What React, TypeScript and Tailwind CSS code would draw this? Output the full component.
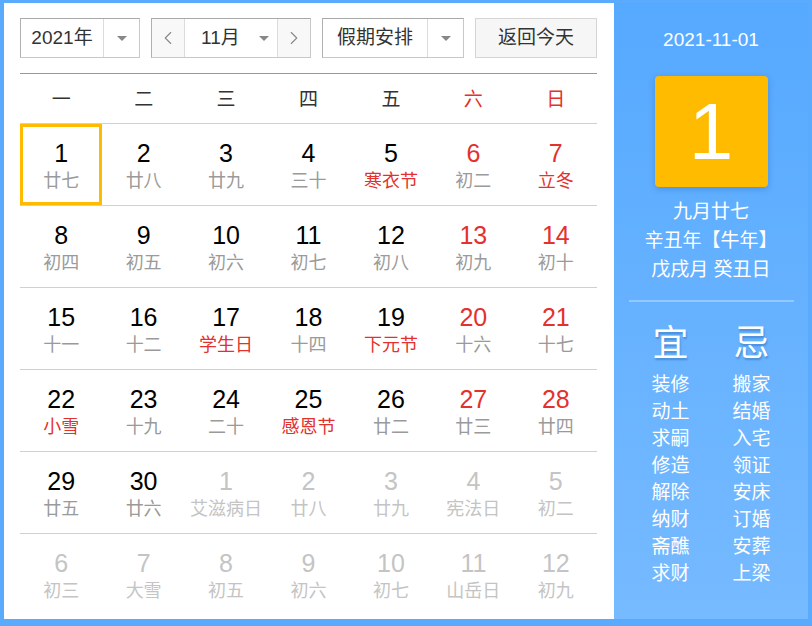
import { ChevronLeft, ChevronRight } from "lucide-react"

type Day = {
  n: number
  lunar: string
  red?: boolean // red day number (weekend)
  fest?: boolean // red lunar text (festival / solar term)
  other?: boolean // day from the next month
}

const weekdays = ["一", "二", "三", "四", "五", "六", "日"]

const rows: Day[][] = [
  [
    { n: 1, lunar: "廿七" },
    { n: 2, lunar: "廿八" },
    { n: 3, lunar: "廿九" },
    { n: 4, lunar: "三十" },
    { n: 5, lunar: "寒衣节", fest: true },
    { n: 6, lunar: "初二", red: true },
    { n: 7, lunar: "立冬", red: true, fest: true },
  ],
  [
    { n: 8, lunar: "初四" },
    { n: 9, lunar: "初五" },
    { n: 10, lunar: "初六" },
    { n: 11, lunar: "初七" },
    { n: 12, lunar: "初八" },
    { n: 13, lunar: "初九", red: true },
    { n: 14, lunar: "初十", red: true },
  ],
  [
    { n: 15, lunar: "十一" },
    { n: 16, lunar: "十二" },
    { n: 17, lunar: "学生日", fest: true },
    { n: 18, lunar: "十四" },
    { n: 19, lunar: "下元节", fest: true },
    { n: 20, lunar: "十六", red: true },
    { n: 21, lunar: "十七", red: true },
  ],
  [
    { n: 22, lunar: "小雪", fest: true },
    { n: 23, lunar: "十九" },
    { n: 24, lunar: "二十" },
    { n: 25, lunar: "感恩节", fest: true },
    { n: 26, lunar: "廿二" },
    { n: 27, lunar: "廿三", red: true },
    { n: 28, lunar: "廿四", red: true },
  ],
  [
    { n: 29, lunar: "廿五" },
    { n: 30, lunar: "廿六" },
    { n: 1, lunar: "艾滋病日", other: true },
    { n: 2, lunar: "廿八", other: true },
    { n: 3, lunar: "廿九", other: true },
    { n: 4, lunar: "宪法日", other: true },
    { n: 5, lunar: "初二", other: true },
  ],
  [
    { n: 6, lunar: "初三", other: true },
    { n: 7, lunar: "大雪", other: true },
    { n: 8, lunar: "初五", other: true },
    { n: 9, lunar: "初六", other: true },
    { n: 10, lunar: "初七", other: true },
    { n: 11, lunar: "山岳日", other: true },
    { n: 12, lunar: "初九", other: true },
  ],
]

const yi = ["装修", "动土", "求嗣", "修造", "解除", "纳财", "斋醮", "求财"]
const ji = ["搬家", "结婚", "入宅", "领证", "安床", "订婚", "安葬", "上梁"]

const font = "font-['Liberation_Sans','Noto_Sans_CJK_SC',sans-serif]"

function Caret() {
  return <span className="block w-0 h-0 border-x-[5px] border-x-transparent border-t-[5px] border-t-[#888]" />
}

function Select({ label, textW }: { label: string; textW: string }) {
  return (
    <div className="shrink-0 flex h-[40px] border border-[#c8c8c8] border-t-[#a8a8a8] border-l-[#b0b0b0] bg-white">
      <div className={`${textW} flex items-center justify-center text-[19px] text-[#333]`}>{label}</div>
      <div className="w-[36px] flex items-center justify-center border-l border-[#dcdcdc]">
        <Caret />
      </div>
    </div>
  )
}

function Cell({ d, selected }: { d: Day; selected?: boolean }) {
  const numColor = d.other ? "text-[#c4c4c4]" : d.red ? "text-[#e3312d]" : "text-black"
  const lunarColor = d.other ? "text-[#c4c4c4]" : d.fest ? "text-[#e3312d]" : "text-[#9a9a9a]"
  return (
    <div
      className={`flex flex-col items-center pt-[14px] ${selected ? "shadow-[inset_0_0_0_3px_#ffbb00]" : ""}`}
    >
      <span className={`text-[25px] leading-[30px] ${numColor}`}>{d.n}</span>
      <span className={`text-[18px] leading-[24px] mt-[1px] ${lunarColor}`}>{d.lunar}</span>
    </div>
  )
}

export default function App() {
  return (
    <div
      className={`${font} w-[812px] h-[626px] flex border-l-[4px] border-t-[3px] border-r-[4px] border-b-[7px] border-[#5aabfe] bg-white`}
    >
      {/* calendar */}
      <div className="w-[610px] pl-[16px] pr-[17px] pt-[15px]">
        <div className="flex gap-[11px]">
          <Select label="2021年" textW="w-[82px]" />

          <div className="shrink-0 flex h-[40px] border border-[#c8c8c8] border-t-[#a8a8a8] border-l-[#b0b0b0]">
            <div className="w-[33px] flex items-center justify-center bg-[#f8f8f8] border-r border-[#dcdcdc]">
              <ChevronLeft size={22} strokeWidth={1.2} className="text-[#888]" />
            </div>
            <div className="w-[92px] flex items-center text-[19px] text-[#333]">
              <span className="ml-[16px] w-[58px]">11月</span>
              <Caret />
            </div>
            <div className="w-[33px] flex items-center justify-center bg-[#f8f8f8] border-l border-[#dcdcdc]">
              <ChevronRight size={22} strokeWidth={1.2} className="text-[#888]" />
            </div>
          </div>

          <Select label="假期安排" textW="w-[104px]" />

          <button className="flex-1 h-[40px] border border-[#d4d4d4] bg-[#f6f6f6] text-[19px] text-[#333]">
            返回今天
          </button>
        </div>

        <div className="mt-[15px] border-t border-[#5aa8f2] h-[50px] pt-[3px] grid grid-cols-7 items-center">
          {weekdays.map((w, i) => (
            <div key={w} className={`text-center text-[19px] ${i >= 5 ? "text-[#e3312d]" : "text-[#333]"}`}>
              {w}
            </div>
          ))}
        </div>

        {rows.map((row, r) => (
          <div key={r} className="grid grid-cols-7 h-[82px] border-t border-[#d0d0d0]">
            {row.map((d, i) => (
              <Cell key={i} d={d} selected={r === 0 && i === 0} />
            ))}
          </div>
        ))}
      </div>

      {/* day detail */}
      <div className="flex-1 flex flex-col items-center bg-gradient-to-b from-[#55a9ff] to-[#76baff] text-white">
        <div className="mt-[25px] text-[19px] leading-[24px]">2021-11-01</div>
        <div className="mt-[24px] w-[113px] h-[111px] rounded-[4px] bg-[#ffbb00] shadow-[0_2px_6px_rgba(0,60,140,0.25)] flex items-center justify-center text-[80px] leading-none">
          1
        </div>
        <div className="mt-[10px] text-[19px] leading-[29px] text-center">
          <div>九月廿七</div>
          <div>辛丑年【牛年】</div>
          <div>戊戌月 癸丑日</div>
        </div>
        <div className="mt-[16px] w-[165px] h-[2px] bg-[#93c9ff]" />
        <div className="mt-[22px] flex gap-[43px]">
          {[
            { head: "宜", items: yi },
            { head: "忌", items: ji },
          ].map((col) => (
            <div key={col.head} className="flex flex-col items-center">
              <div className="text-[36px] leading-[40px] [text-shadow:1px_2px_2px_rgba(0,50,120,0.3)]">
                {col.head}
              </div>
              <div className="mt-[7px] flex flex-col text-[19px] leading-[27px]">
                {col.items.map((t) => (
                  <span key={t}>{t}</span>
                ))}
              </div>
            </div>
          ))}
        </div>
      </div>
    </div>
  )
}
